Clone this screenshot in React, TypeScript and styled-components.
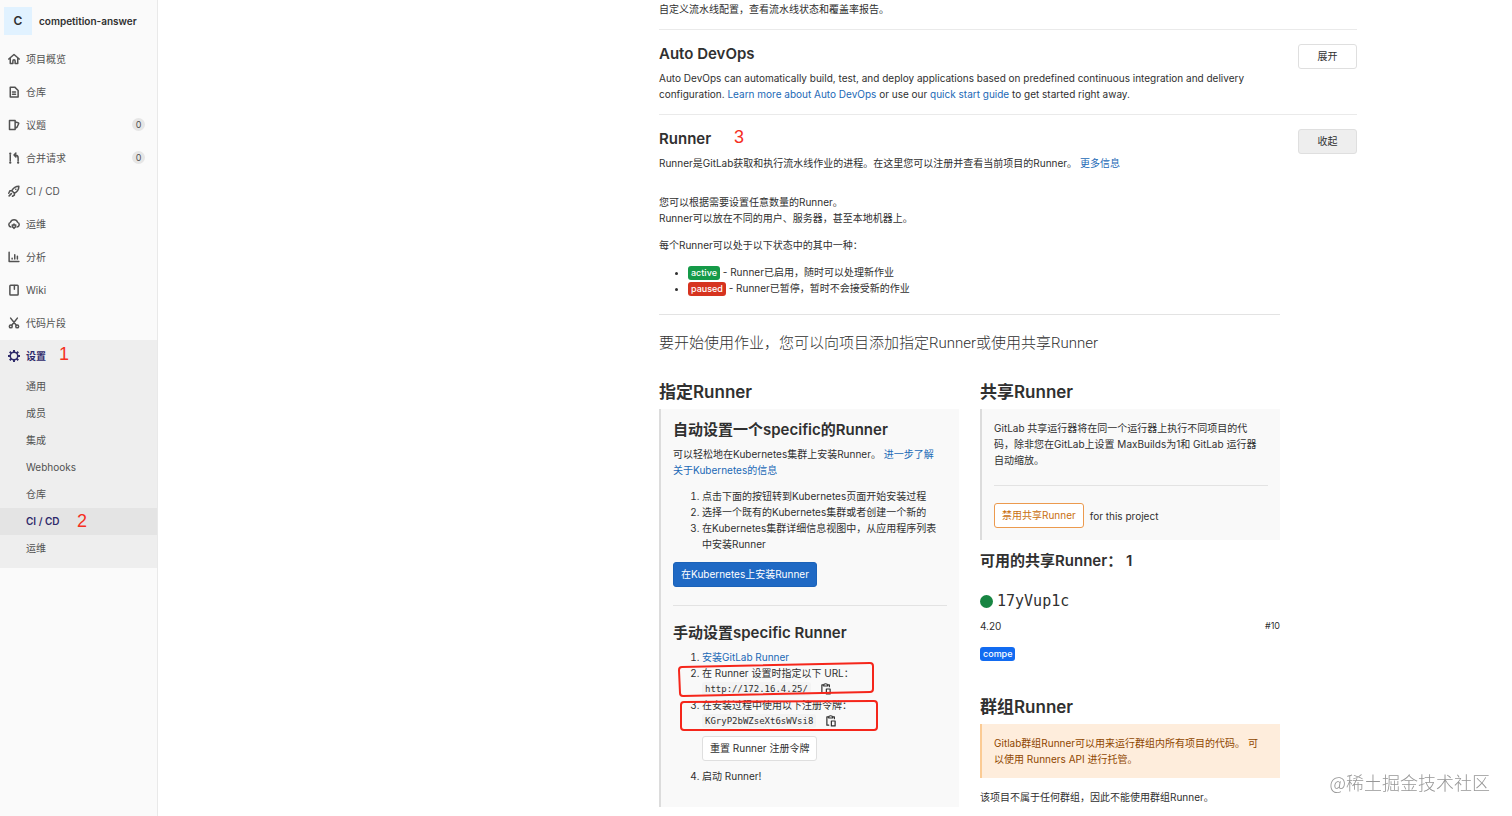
import React from 'react';
import styled, { createGlobalStyle, css } from 'styled-components';

const GlobalStyle = createGlobalStyle`
  *, *::before, *::after { box-sizing: border-box; }
  body {
    margin: 0;
    background: #fff;
    color: #303030;
    font-family: Inter, "Noto Sans CJK SC", sans-serif;
    font-size: 10px;
    line-height: 16px;
  }
  h1, h2, h3, h4, p, ul, ol { margin: 0; padding: 0; }
  a { color: #1b69b6; text-decoration: none; }
  button { font: inherit; cursor: pointer; }
`;

const Page = styled.div`
  display: flex;
  min-height: 100vh;
`;

const Sidebar = styled.nav`
  flex: 0 0 158px;
  background: #fafafa;
  border-right: 1px solid #e9e9e9;
`;

const ProjectLink = styled.a`
  display: flex;
  align-items: center;
  gap: 7px;
  height: 43px;
  padding: 0 4px 2px;
  color: #303030;
  font-weight: 600;
`;

const Avatar = styled.span`
  width: 28px;
  height: 28px;
  line-height: 28px;
  text-align: center;
  font-size: 12px;
  background: #e1f2ff;
`;

const NavList = styled.ul`
  list-style: none;
`;

const NavLink = styled.a<{ $active?: boolean }>`
  position: relative;
  display: flex;
  align-items: center;
  gap: 6px;
  height: 33px;
  padding: 0 12px 2px 8px;
  color: ${p => (p.$active ? '#2f2a6b' : '#525252')};
  font-weight: ${p => (p.$active ? 600 : 400)};
`;

const ActiveGroup = styled.li`
  padding-bottom: 6px;
  background: #eeeeee;
`;

const SubLink = styled.a<{ $active?: boolean }>`
  position: relative;
  display: flex;
  align-items: center;
  height: 27px;
  padding: 0 0 1px 26px;
  color: ${p => (p.$active ? '#2f2a6b' : '#525252')};
  font-weight: ${p => (p.$active ? 600 : 400)};
  background: ${p => (p.$active ? '#e4e4e4' : 'transparent')};
`;

const Count = styled.span`
  margin-left: auto;
  min-width: 13px;
  height: 13px;
  border-radius: 7px;
  background: #e6e6e6;
  font-size: 9px;
  line-height: 13px;
  text-align: center;
`;

const Icon = styled.svg`
  width: 12px;
  height: 12px;
  flex: none;
  fill: none;
  stroke: currentColor;
  stroke-width: 2;
  stroke-linecap: round;
  stroke-linejoin: round;
`;

const Mark = styled.span<{ $x: number; $y: number }>`
  position: absolute;
  left: ${p => p.$x}px;
  top: ${p => p.$y}px;
  color: #f5301f;
  font-family: "Liberation Sans", sans-serif;
  font-size: 18px;
  font-weight: 400;
  line-height: 20px;
`;

const Main = styled.main`
  flex: 1;
  display: flex;
  justify-content: flex-end;
  padding: 1px 155px 9px 40px;
`;

const Content = styled.div`
  width: 100%;
  max-width: 698px;
`;

const Section = styled.section`
  padding-bottom: 12px;
  & + & { border-top: 1px solid #eaeaea; padding-top: 14px; }
`;

const SectionHead = styled.div`
  display: flex;
  justify-content: space-between;
  align-items: flex-start;
  gap: 40px;
`;

const SectionTitle = styled.h2`
  position: relative;
  margin-bottom: 6px;
  font-size: 15px;
  font-weight: 600;
  line-height: 20px;
`;

const Text = styled.p`
  line-height: 16px;
`;

const Button = styled.button<{ $kind?: 'primary' | 'warning' | 'pressed'; $wide?: boolean }>`
  flex: none;
  height: 25px;
  min-width: ${p => (p.$wide ? 59 : 0)}px;
  padding: 0 7px 1px;
  border: 1px solid #dfdfdf;
  border-radius: 3px;
  background: #fff;
  color: #303030;
  line-height: 16px;
  white-space: nowrap;
  ${p => p.$kind === 'pressed' && css`background: #eeeeee;`}
  ${p => p.$kind === 'primary' && css`background: #1f69c4; border-color: #1b62b8; color: #fff;`}
  ${p => p.$kind === 'warning' && css`border-color: #ec9a4e; color: #c9700f;`}
`;

const SectionBody = styled.div`
  padding: 23px 77px 0 0;
`;

const States = styled.ul`
  margin: 11px 0 18px;
  padding-left: 29px;
`;

const Badge = styled.span<{ $color: string }>`
  display: inline-block;
  height: 14px;
  padding: 0 3px;
  border-radius: 3px;
  background: ${p => p.$color};
  color: #fff;
  font-size: 9px;
  font-weight: 500;
  line-height: 14px;
`;

const Rule = styled.hr`
  height: 1px;
  margin: 0;
  border: 0;
  background: #e3e3e3;
`;

const Lead = styled.p`
  margin: 18px 0 28px;
  font-family: Roboto, "Noto Sans CJK SC", sans-serif;
  font-size: 15px;
  font-weight: 300;
  line-height: 20px;
`;

const Columns = styled.div`
  display: grid;
  grid-template-columns: 1fr 1fr;
  gap: 21px;
`;

const ColumnTitle = styled.h3`
  margin-bottom: 6px;
  font-size: 17px;
  font-weight: 600;
  line-height: 22px;
`;

const Well = styled.div<{ $warning?: boolean }>`
  padding: 11px 12px;
  border-left: 2px solid ${p => (p.$warning ? '#fbcb94' : '#dcdcdc')};
  background: ${p => (p.$warning ? '#feeddc' : '#f9f9f9')};
  color: ${p => (p.$warning ? '#8f4700' : '#303030')};
`;

const WellTitle = styled.h4`
  margin-bottom: 6px;
  font-size: 15px;
  font-weight: 600;
  line-height: 20px;
`;

const Steps = styled.ol`
  padding-left: 29px;
`;

const AutoSetup = styled.div`
  padding-bottom: 18px;
  ${Steps} { margin: 10px 0; }
`;

const ManualSetup = styled.div`
  padding: 17px 0 12px;
  ${Button} { margin: 7px 0; }
`;

const Step = styled.li`
  position: relative;
`;

const CodeLine = styled.div`
  display: flex;
  align-items: center;
  gap: 9px;
  height: 16px;
  padding-bottom: 1px;
`;

const Code = styled.code`
  padding: 0 3px;
  border-radius: 3px;
  background: #f3f3f3;
  font-family: "DejaVu Sans Mono", monospace;
  font-size: 9px;
  line-height: 14px;
`;

const CopyButton = styled.button`
  display: flex;
  padding: 0;
  border: 0;
  background: none;
  color: #303030;
`;

const Outline = styled.svg<{ $x: number; $y: number }>`
  position: absolute;
  z-index: 1;
  left: ${p => p.$x}px;
  top: ${p => p.$y}px;
  width: 200px;
  height: 38px;
  fill: none;
  stroke: #f5261b;
  stroke-width: 2;
  stroke-linejoin: round;
  pointer-events: none;
`;

const SharedToggle = styled.div`
  display: flex;
  align-items: center;
  gap: 6px;
  margin: 17px 0 1px;
`;

const SharedRule = styled(Rule)`
  margin-top: 17px;
`;

const AvailableTitle = styled.h4`
  margin: 11px 0 20px;
  font-size: 15px;
  font-weight: 600;
  line-height: 20px;
`;

const RunnerName = styled.div`
  display: flex;
  align-items: center;
  gap: 4px;
  font-family: "DejaVu Sans Mono", monospace;
  font-size: 15px;
  line-height: 20px;
`;

const Online = styled.span`
  width: 13px;
  height: 13px;
  border-radius: 50%;
  background: #178542;
`;

const RunnerMeta = styled.div`
  display: flex;
  justify-content: space-between;
  margin: 7px 0 11px;
`;

const Small = styled.small`
  font-size: 9px;
`;

const GroupTitle = styled(ColumnTitle)`
  margin-top: 35px;
`;

const Note = styled.p`
  margin-top: 11px;
`;

const Watermark = styled.div`
  position: fixed;
  right: 22px;
  bottom: 21px;
  color: #979797;
  font-size: 18px;
  font-weight: 300;
  line-height: 26px;
  font-family: "Noto Sans CJK SC", sans-serif;
`;

const icons: Record<string, React.ReactNode> = {
  home: <path d="M1 8 8 2l7 6M3 7v7h3.500v-3.500a1.500 1.500 0 0 1 3 0V14H13V7" />,
  file: <><path d="M3 1.500h6L13.500 6v8.500H3z" /><path d="M6 8h4M6 11h4" /></>,
  issues: <path d="M2 2h7.500v12H2zM10 4l3.500 1a1 1 0 0 1 .700 1.400L12 11l-2 1" />,
  merge: <><path d="M3 4v8M13.500 12V8a4 4 0 0 0-4-4H8M10.500 1.500 8 4l2.500 2.500" /><path d="M3 2v.2M3 14v.2M13.500 14v.2" strokeWidth="3" /></>,
  rocket: <><path d="M14.500 1.500C10 1.500 7 4 5 7.500L8.500 11c3.500-2 6-5 6-9.500zM5 7.500l-2.500.3L1 11M8.500 11v2.500L6 15M10.300 5.800h.2M1.500 14.500 4.500 11.500" /></>,
  cloud: <><path d="M4 12a3.200 3.200 0 0 1-.700-6.200 5 5 0 0 1 9.500 0A3.200 3.200 0 0 1 12 12" /><circle cx="8" cy="11" r="2" /><path d="M8 8v.5M8 13.500v.5M5.500 9.500l.5.300M10.500 9.500l-.5.300" /></>,
  chart: <path d="M1.500 1.500v12.500h13M5.500 10.500v-1M9 10.500V5M12.500 10.500V7" />,
  book: <><rect x="2.500" y="1.500" width="11" height="13" rx="1" /><path d="M8.500 2v5" /></>,
  scissors: <><path d="M3.500 1.500 11 11M12.500 1.500 5 11" /><circle cx="3.700" cy="12.500" r="1.900" /><circle cx="12.300" cy="12.500" r="1.900" /></>,
  settings: <><circle cx="8" cy="8" r="5" /><path strokeWidth="2.600" strokeLinecap="butt" d="M8 0v3M8 13v3M0 8h3M13 8h3M2.300 2.300l2.200 2.200M11.500 11.500l2.200 2.200M13.700 2.300l-2.200 2.200M4.500 11.500l-2.200 2.200" /></>,
  copy: <><path d="M5 13.500H2.500v-11H5M10 2.500h2.500V5M5 4V2.500a2.500 1.500 0 0 1 5 0V4z" strokeWidth="1.600" /><path d="M8.500 8h5v6.500h-5z" strokeWidth="1.600" /></>,
};

const Glyph = ({ name }: { name: string }) => (
  <Icon viewBox="0 0 16 16" aria-hidden="true">{icons[name]}</Icon>
);

const navItems: { icon: string; label: string; count?: number }[] = [
  { icon: 'home', label: '项目概览' },
  { icon: 'file', label: '仓库' },
  { icon: 'issues', label: '议题', count: 0 },
  { icon: 'merge', label: '合并请求', count: 0 },
  { icon: 'rocket', label: 'CI / CD' },
  { icon: 'cloud', label: '运维' },
  { icon: 'chart', label: '分析' },
  { icon: 'book', label: 'Wiki' },
  { icon: 'scissors', label: '代码片段' },
];

const subItems = ['通用', '成员', '集成', 'Webhooks', '仓库', 'CI / CD', '运维'];

export default function App() {
  return (
    <>
      <GlobalStyle />
      <Page>
        <Sidebar>
          <ProjectLink href="#"><Avatar>C</Avatar>competition-answer</ProjectLink>
          <NavList>
            {navItems.map(item => (
              <li key={item.label}>
                <NavLink href="#">
                  <Glyph name={item.icon} />
                  {item.label}
                  {item.count !== undefined && <Count>{item.count}</Count>}
                </NavLink>
              </li>
            ))}
            <ActiveGroup>
              <NavLink href="#" $active>
                <Glyph name="settings" />设置<Mark $x={59} $y={4}>1</Mark>
              </NavLink>
              <NavList>
                {subItems.map(label => (
                  <li key={label}>
                    <SubLink href="#" $active={label === 'CI / CD'}>
                      {label}
                      {label === 'CI / CD' && <Mark $x={77} $y={3}>2</Mark>}
                    </SubLink>
                  </li>
                ))}
              </NavList>
            </ActiveGroup>
          </NavList>
        </Sidebar>

        <Main>
          <Content>
            <Section>
              <Text>自定义流水线配置，查看流水线状态和覆盖率报告。</Text>
            </Section>

            <Section>
              <SectionHead>
                <div>
                  <SectionTitle>Auto DevOps</SectionTitle>
                  <Text>
                    Auto DevOps can automatically build, test, and deploy applications based on predefined continuous integration and delivery<br />
                    configuration. <a href="#">Learn more about Auto DevOps</a> or use our <a href="#">quick start guide</a> to get started right away.
                  </Text>
                </div>
                <Button $wide>展开</Button>
              </SectionHead>
            </Section>

            <Section>
              <SectionHead>
                <div>
                  <SectionTitle>Runner<Mark $x={75} $y={-2}>3</Mark></SectionTitle>
                  <Text>
                    Runner是GitLab获取和执行流水线作业的进程。在这里您可以注册并查看当前项目的Runner。 <a href="#">更多信息</a>
                  </Text>
                </div>
                <Button $wide $kind="pressed">收起</Button>
              </SectionHead>

              <SectionBody>
                <Text>您可以根据需要设置任意数量的Runner。<br />Runner可以放在不同的用户、服务器，甚至本地机器上。</Text>
                <Note>每个Runner可以处于以下状态中的其中一种：</Note>
                <States>
                  <li><Badge $color="#159a48">active</Badge> - Runner已启用，随时可以处理新作业</li>
                  <li><Badge $color="#d6331f">paused</Badge> - Runner已暂停，暂时不会接受新的作业</li>
                </States>
                <Rule />
                <Lead>要开始使用作业，您可以向项目添加指定Runner或使用共享Runner</Lead>

                <Columns>
                  <div>
                    <ColumnTitle>指定Runner</ColumnTitle>
                    <Well>
                      <AutoSetup>
                        <WellTitle>自动设置一个specific的Runner</WellTitle>
                        <Text>
                          可以轻松地在Kubernetes集群上安装Runner。 <a href="#">进一步了解<br />关于Kubernetes的信息</a>
                        </Text>
                        <Steps>
                          <Step>点击下面的按钮转到Kubernetes页面开始安装过程</Step>
                          <Step>选择一个既有的Kubernetes集群或者创建一个新的</Step>
                          <Step>在Kubernetes集群详细信息视图中，从应用程序列表<br />中安装Runner</Step>
                        </Steps>
                        <Button $kind="primary">在Kubernetes上安装Runner</Button>
                      </AutoSetup>
                      <Rule />
                      <ManualSetup>
                        <WellTitle>手动设置specific Runner</WellTitle>
                        <Steps>
                          <Step><a href="#">安装GitLab Runner</a></Step>
                          <Step>
                            在 Runner 设置时指定以下 URL：
                            <CodeLine>
                              <Code>http://172.16.4.25/</Code>
                              <CopyButton aria-label="复制 URL"><Glyph name="copy" /></CopyButton>
                            </CodeLine>
                            <Outline $x={-24} $y={-4} viewBox="0 0 200 38" aria-hidden="true">
                              <path d="M4 6 192 2Q195 2 195 5V28Q195 31 192 31L5 35Q2 35 2 32L1 9Q1 6 4 6Z" />
                            </Outline>
                          </Step>
                          <Step>
                            在安装过程中使用以下注册令牌：
                            <CodeLine>
                              <Code>KGryP2bWZseXt6sWVsi8</Code>
                              <CopyButton aria-label="复制令牌"><Glyph name="copy" /></CopyButton>
                            </CodeLine>
                            <Outline $x={-23} $y={2} viewBox="0 0 200 38" aria-hidden="true">
                              <path d="M5 3 195 2Q198 2 198 5V28Q198 31 195 31H5Q2 31 2 28V6Q2 3 5 3Z" />
                            </Outline>
                            <Button>重置 Runner 注册令牌</Button>
                          </Step>
                          <Step>启动 Runner!</Step>
                        </Steps>
                      </ManualSetup>
                    </Well>
                  </div>

                  <div>
                    <ColumnTitle>共享Runner</ColumnTitle>
                    <Well>
                      <Text>
                        GitLab 共享运行器将在同一个运行器上执行不同项目的代<br />码，除非您在GitLab上设置 MaxBuilds为1和 GitLab 运行器<br />自动缩放。
                      </Text>
                      <SharedRule />
                      <SharedToggle>
                        <Button $kind="warning">禁用共享Runner</Button>
                        <span>for this project</span>
                      </SharedToggle>
                    </Well>
                    <AvailableTitle>可用的共享Runner： 1</AvailableTitle>
                    <RunnerName><Online />17yVup1c</RunnerName>
                    <RunnerMeta><span>4.20</span><Small>#10</Small></RunnerMeta>
                    <Badge $color="#126bf1">compe</Badge>
                    <GroupTitle>群组Runner</GroupTitle>
                    <Well $warning>
                      <Text>
                        Gitlab群组Runner可以用来运行群组内所有项目的代码。 可<br />以使用 Runners API 进行托管。
                      </Text>
                    </Well>
                    <Note>该项目不属于任何群组，因此不能使用群组Runner。</Note>
                  </div>
                </Columns>
              </SectionBody>
            </Section>
          </Content>
        </Main>
      </Page>
      <Watermark>@稀土掘金技术社区</Watermark>
    </>
  );
}
